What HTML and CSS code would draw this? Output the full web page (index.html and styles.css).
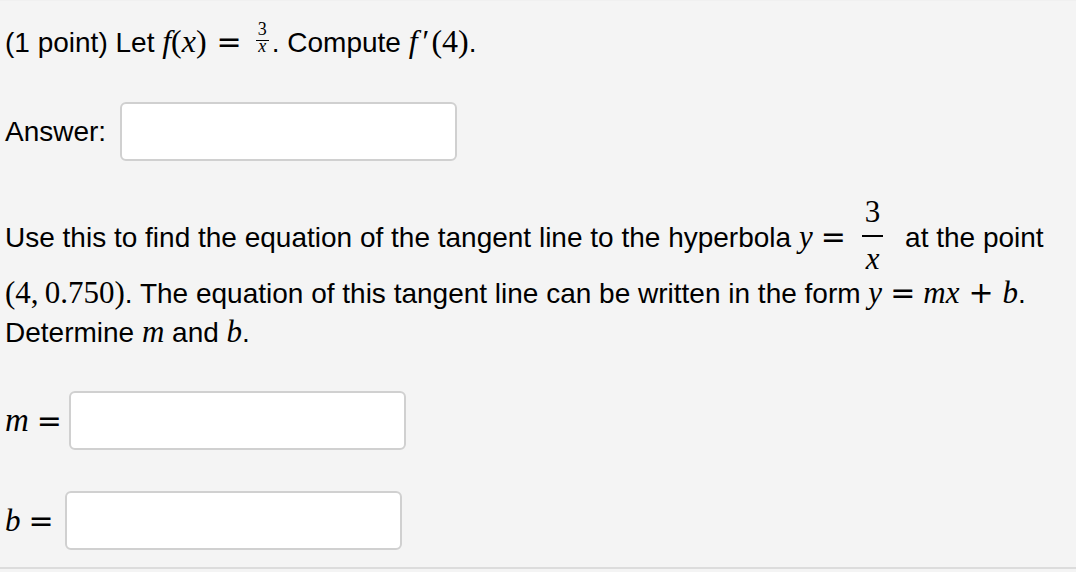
FILE: index.html
```html
<!DOCTYPE html>
<html>
<head>
<meta charset="utf-8">
<link rel="stylesheet" href="styles.css">
</head>
<body>
<div class="page">
  <p class="intro">(1 point) Let <span class="math"><span class="mi">f</span><span class="mo">(</span><span class="mi">x</span><span class="mo">)</span><span class="rel">=</span><span class="sfrac"><span class="snum">3</span><span class="sden">x</span></span></span>. Compute <span class="math"><span class="mi">f</span><span class="prime">′</span><span class="mo">(4)</span></span>.</p>

  <div class="row answer-row">
    <span class="label">Answer:</span>
    <span class="field"></span>
  </div>

  <p class="body">Use this to find the equation of the tangent line to the hyperbola <span class="math"><span class="mi">y</span><span class="rel">=</span><span class="dfrac"><span class="dnum">3</span><span class="dden">x</span></span></span> at the point <span class="math"><span class="mo">(4,&#8201;0.750)</span></span>. The equation of this tangent line can be written in the form <span class="math"><span class="mi">y</span><span class="rel">=</span><span class="mi">mx</span><span class="bin">+</span><span class="mi">b</span></span>. Determine <span class="mi">m</span> and <span class="mi">b</span>.</p>

  <div class="row m-row">
    <span class="label mlabel"><span class="mi">m</span><span class="rel">=</span></span>
    <span class="field"></span>
  </div>

  <div class="row b-row">
    <span class="label mlabel"><span class="mi">b</span><span class="rel">=</span></span>
    <span class="field"></span>
  </div>
</div>
</body>
</html>
```

FILE: styles.css
```css
html, body {
  margin: 0;
  padding: 0;
  background: #f4f4f4;
}

.page {
  height: 569px;
  border-bottom: 2px solid #dcdcdc;
  border-top: 1px solid #f0f0f0;
  box-sizing: border-box;
  padding: 0 5px;
  font-family: "Liberation Sans", Arial, sans-serif;
  font-size: 28px;
  color: #000;
}

p { margin: 0; }

.math { white-space: nowrap; }

.mi {
  font-family: "Liberation Serif", "Times New Roman", serif;
  font-style: italic;
  font-size: 31px;
}

.mo {
  font-family: "Liberation Serif", "Times New Roman", serif;
  font-size: 31px;
}

.intro .mi, .intro .mo { font-size: 32px; }

.prime {
  font-family: "Liberation Serif", "Times New Roman", serif;
  font-size: 31px;
  padding: 0 2px 0 5px;
}

.rel, .bin {
  font-family: "DejaVu Sans", sans-serif;
  font-size: 30px;
  padding: 0 8px;
}

.intro .rel { padding: 0 10px; }

.intro {
  height: 39px;
  line-height: 38px;
  padding-top: 20px;
}

.sfrac {
  display: inline-flex;
  flex-direction: column;
  align-items: center;
  vertical-align: 17px;
  font-family: "Liberation Serif", "Times New Roman", serif;
  font-size: 18px;
  line-height: 17px;
  margin: 0 3px 0 4px;
}
.snum {
  border-bottom: 1.5px solid #000;
  padding: 0 2px 2px;
}
.sden {
  font-style: italic;
  line-height: 11px;
}

.row {
  display: flex;
  align-items: center;
}

.field {
  display: block;
  width: 337px;
  height: 59px;
  box-sizing: border-box;
  background: #fff;
  border: 2px solid #d0d0d0;
  border-radius: 6px;
}

.answer-row {
  margin-top: 42px;
}
.answer-row .label { width: 115px; }

.body {
  margin-top: 36px;
  line-height: 38px;
}

.dfrac {
  display: inline-flex;
  flex-direction: column;
  align-items: center;
  vertical-align: 25px;
  font-family: "Liberation Serif", "Times New Roman", serif;
  font-size: 31px;
  line-height: 30px;
  margin: 0 14px 0 8px;
}
.dnum {
  border-bottom: 2px solid #000;
  padding: 0 3px 8px;
}
.dden {
  font-style: italic;
  padding-top: 7px;
}

.body .bin { padding: 0 9px; }

.m-row { margin-top: 39px; }
.m-row .label { width: 64px; }
.m-row .mi { font-size: 33px; }
.b-row { margin-top: 41px; }
.b-row .label { width: 60px; }

.mlabel .rel { padding-right: 0; }
```
